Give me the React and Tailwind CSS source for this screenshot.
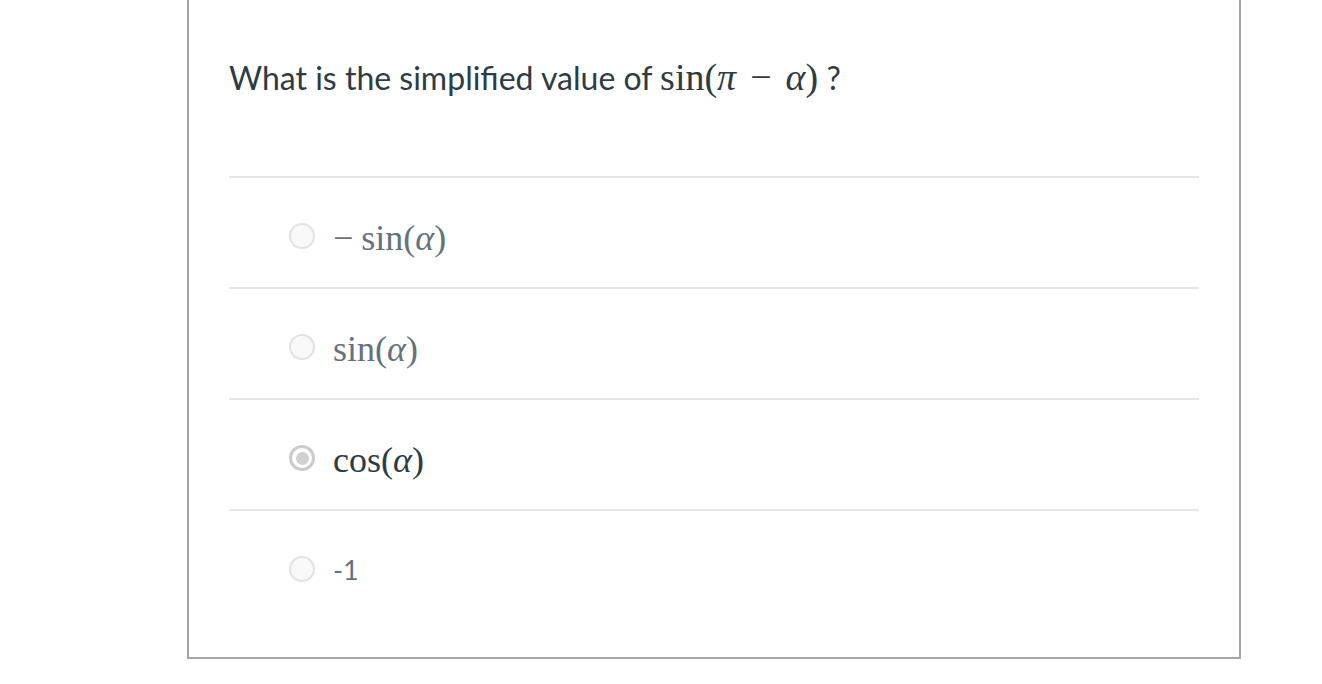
import React from "react";

const options = [
  { id: "a", kind: "math", neg: true, fn: "sin" },
  { id: "b", kind: "math", fn: "sin" },
  { id: "c", kind: "math", fn: "cos", checked: true },
  { id: "d", kind: "text", label: "-1" },
];

function Radio({ checked }) {
  if (checked) {
    return (
      <span className="flex h-[26px] w-[26px] shrink-0 items-center justify-center rounded-full border-[3px] border-[#cbcbcb] bg-white">
        <span className="h-[13px] w-[13px] rounded-full bg-[#d0d0d0]" />
      </span>
    );
  }
  return (
    <span className="h-[26px] w-[26px] shrink-0 rounded-full border-2 border-[#e2e2e2] bg-[#f9f9f9]" />
  );
}

function Alpha() {
  return <span className="italic">α</span>;
}

export default function App() {
  return (
    <div className="min-h-screen bg-white font-['Lato',sans-serif]">
      <div className="ml-[187px] w-[1054px] border-x-2 border-b-2 border-[#a6a6a6] px-[40px] pb-[37px]">
        {/* question */}
        <div className="pt-[59px]">
          <p className="h-[38px] text-[32px] leading-[38px] text-[#2d3b45]">
            What is the simplified value of{" "}
            <span className="font-['Liberation_Serif',serif] text-[38px] leading-[20px]">
              sin(<span className="italic">π</span>
              <span className="mx-[14px]">−</span>
              <Alpha />)
            </span>{" "}
            ?
          </p>
        </div>

        <div className="mt-[79px]">
          {options.map((o) => (
            <div
              key={o.id}
              className="border-t-2 border-[#e6e6e6] pt-[44px] pb-[37px] pl-[60px]"
            >
              <label className="flex h-[28px] items-center gap-[18px]">
                <Radio checked={o.checked} />
                {o.kind === "math" ? (
                  <span
                    className={
                      "translate-y-[2px] font-['Liberation_Serif',serif] text-[36px] leading-[40px] " +
                      (o.checked ? "text-[#2d3b45]" : "text-[#65727c]")
                    }
                  >
                    {o.neg && <span className="mr-[8px]">−</span>}
                    {o.fn}(<Alpha />)
                  </span>
                ) : (
                  <span className="translate-y-[1px] text-[27px] leading-[30px] text-[#65727c]">
                    {o.label}
                  </span>
                )}
              </label>
            </div>
          ))}
        </div>
      </div>
    </div>
  );
}
